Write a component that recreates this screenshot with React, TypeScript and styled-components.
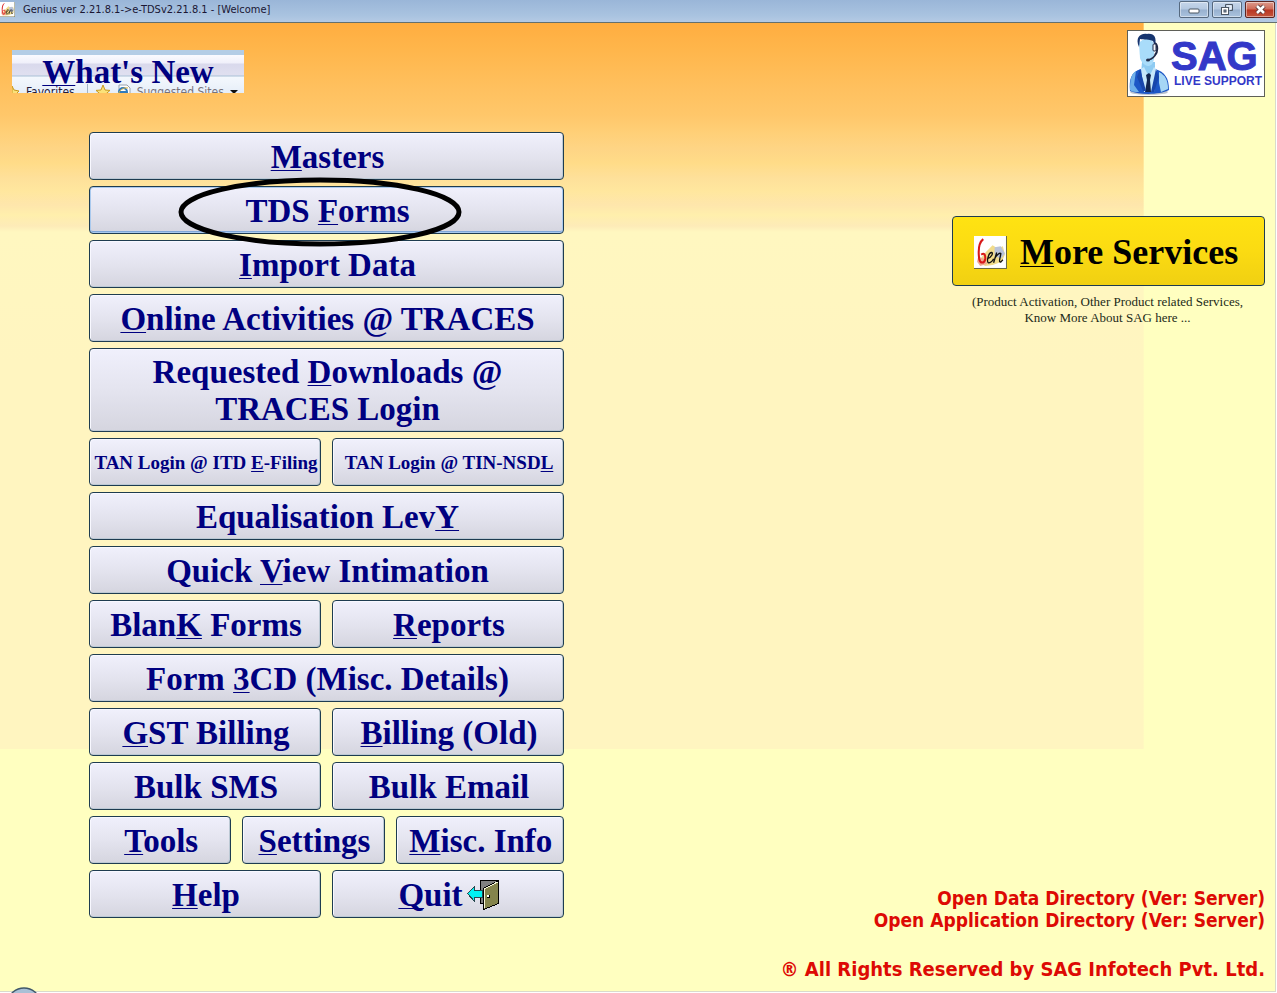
import React from 'react';
import styled, { createGlobalStyle, css } from 'styled-components';

const serif = '"Palatino Linotype", "Liberation Serif", serif';
const tahoma = '"DejaVu Sans Condensed", "DejaVu Sans", sans-serif';

const GlobalStyle = createGlobalStyle`
  * { box-sizing: border-box; }
  body { margin: 0; background: #fff; }
  button { cursor: pointer; }
`;

const Window = styled.div`
  min-height: 100vh;
  display: flex;
  flex-direction: column;
  position: relative;
  overflow: hidden;
`;

const TitleBar = styled.header`
  height: 23px;
  flex: none;
  display: flex;
  align-items: center;
  justify-content: space-between;
  padding: 0 2px 3px 0;
  background: linear-gradient(#9ab6d8, #a9c3e0 70%, #b4cae4);
  border-bottom: 1px solid #66706c;
`;

const TitleText = styled.h1`
  display: flex;
  align-items: center;
  gap: 8px;
  margin: 0;
  font: 400 11px/16px ${tahoma};
  color: #1a1633;
`;

const Controls = styled.div`
  display: flex;
  gap: 3px;
`;

const ControlButton = styled.button<{ $danger?: boolean }>`
  width: 30px;
  height: 17px;
  padding: 0;
  display: flex;
  align-items: center;
  justify-content: center;
  border: 1px solid ${p => (p.$danger ? '#5b2522' : '#56697f')};
  border-radius: 2px;
  box-shadow: inset 0 0 0 1px rgba(255, 255, 255, 0.45);
  background: ${p =>
    p.$danger
      ? 'linear-gradient(#dc9a8c, #cf6a56 48%, #b93622 52%, #c4553c)'
      : 'linear-gradient(#c6d6ea, #b4c8e0 48%, #98b1cf 52%, #a9c2de)'};
`;

const Main = styled.main`
  flex: 1;
  display: flex;
  justify-content: space-between;
  margin: 0 1px 1px 0;
  border-right: 1px solid #d9dccb;
  border-bottom: 1px solid #d9dccb;
  background:
    linear-gradient(
      180deg,
      #ffad40 0,
      #ffb54a 24px,
      #ffbf5c 60px,
      #ffc76a 92px,
      #ffcf76 108px,
      #fed585 126px,
      #ffdc88 140px,
      #fee09a 155px,
      #ffe79e 168px,
      #fee6ac 182px,
      #ffefac 192px,
      #fdebb8 203px,
      #fff7c0 209px,
      #fff5c0 340px,
      #fff5c0 100%
    ) 0 0 / 89.7% 726px no-repeat,
    #ffffc0;
`;

const LeftColumn = styled.div`
  flex: 0 1 564px;
  padding: 27px 0 73px 12px;
`;

const WhatsNewButton = styled.button`
  position: relative;
  display: block;
  width: 232px;
  height: 43px;
  padding: 0;
  overflow: hidden;
  border: 0;
  background: linear-gradient(
    #b4cde6 0 5px,
    #fafaff 5px,
    #f0f0fa 13px,
    #d9d9ec 14px,
    #e0e0f0 25px,
    #a9c0d6 26px,
    #f4f8fd 27px,
    #e6eef8 43px
  );
  font: 700 33px/45px ${serif};
  color: #000080;
`;

const WhatsNewLabel = styled.span`
  position: relative;
`;

const FavoritesStrip = styled.span`
  position: absolute;
  left: 0;
  right: 0;
  top: 34px;
  display: flex;
  align-items: center;
  gap: 6px;
  font: 400 12px/14px ${tahoma};
  color: #251a3a;
  white-space: nowrap;
`;

const SuggestedSites = styled.span`
  color: #77737c;
`;

const StripDivider = styled.span`
  width: 1px;
  height: 16px;
  margin: 0 1px 0 6px;
  background: #a3b4c6;
`;

const Menu = styled.nav`
  margin: 39px 0 0 77px;
  display: flex;
  flex-direction: column;
  gap: 6px;
`;

const MenuRow = styled.div<{ $columns?: string }>`
  display: grid;
  grid-template-columns: ${p => p.$columns ?? '1fr'};
  gap: 11px;
`;

const raised = css`
  border: 1px solid #1e3c50;
  border-radius: 4px;
`;

const MenuButton = styled.button<{ $size?: 'tall' | 'small'; $focused?: boolean }>`
  ${raised}
  position: relative;
  min-width: 0;
  height: ${p => (p.$size === 'tall' ? 84 : 48)}px;
  padding: 2px 0 0 2px;
  display: flex;
  align-items: center;
  justify-content: center;
  gap: 3px;
  background: linear-gradient(#f0f0fc, #e4e4ef 50%, #d5d5df);
  box-shadow: ${p =>
    p.$focused
      ? 'inset 0 0 0 1px #a9c9ee, inset 0 -2px 0 #7fa6d8'
      : 'inset 1px 1px 0 #f8f8ff, inset -1px -1px 0 #bcc9d4'};
  font: 700 ${p => (p.$size === 'small' ? '19px/24px' : '33px/37px')} ${serif};
  color: #000080;
`;

const Key = styled.span`
  text-decoration: underline;
  text-decoration-thickness: 1px;
  text-underline-offset: 2px;
  text-decoration-skip-ink: none;
`;

const Ring = styled.svg`
  position: absolute;
  left: 88px;
  top: -10px;
  width: 284px;
  height: 70px;
  z-index: 1;
  pointer-events: none;
`;

const RightColumn = styled.aside`
  display: flex;
  flex-direction: column;
  align-items: flex-end;
  padding: 7px 10px 10px 0;
`;

const SupportButton = styled.button`
  width: 138px;
  height: 67px;
  padding: 0;
  display: flex;
  border: 1px solid #5f6058;
  background: #fff;
  color: #3338c8;
`;

const SupportText = styled.span`
  display: flex;
  flex-direction: column;
  padding-top: 7px;
  text-align: left;
  white-space: nowrap;
  font-family: "Liberation Sans", sans-serif;
  font-weight: 700;
`;

const SupportName = styled.span`
  font-size: 40px;
  line-height: 36px;
  -webkit-text-stroke: 1px #3338c8;
`;

const SupportCaption = styled.span`
  padding-left: 3px;
  font-size: 12px;
  line-height: 14px;
`;

const Services = styled.section`
  width: 313px;
  margin-top: 119px;
`;

const ServicesButton = styled.button`
  ${raised}
  width: 100%;
  height: 70px;
  padding: 2px 0 0 21px;
  display: flex;
  align-items: center;
  gap: 13px;
  background: linear-gradient(#ffe312, #fbdb12 50%, #f0d012);
  font: 700 36px/40px ${serif};
  color: #000;
`;

const ServicesNote = styled.p`
  margin: 8px 2px 0 0;
  text-align: center;
  font: 400 13px/16px ${serif};
  color: #1c2a18;
`;

const Footer = styled.footer`
  margin-top: auto;
  display: flex;
  flex-direction: column;
  align-items: flex-end;
  font: 700 19px/22px ${tahoma};
  color: #dd0a04;
`;

const DirectoryLink = styled.a`
  color: inherit;
  text-decoration: none;
`;

const Copyright = styled.p`
  margin: 26px 0 0;
  font-size: 20px;
  line-height: 24px;
`;

const StartOrb = styled.svg`
  position: absolute;
  left: 8px;
  bottom: 0;
  width: 32px;
  height: 6px;
`;

/** Splits a caption such as "TDS &Forms" at its access key and underlines that letter. */
function Caption({ text }: { text: string }) {
  const at = text.indexOf('&');
  if (at < 0) return <span>{text}</span>;
  return (
    <span>
      {text.slice(0, at)}
      <Key>{text[at + 1]}</Key>
      {text.slice(at + 2)}
    </span>
  );
}

function GenIcon({ size }: { size: number }) {
  return (
    <svg width={size} height={size} viewBox="0 0 32 32" aria-hidden="true">
      <rect width="32" height="32" fill="#6b6b45" />
      <rect width="31" height="31" fill="#fff" />
      <path d="M12 15l6-6 5 3 5-2 2 8-3 7-9 3-7 1-7-3 3-5z" fill="#f1dc8c" />
      <path d="M20 11l6-1 4 7-4 5-6-3z" fill="#b9c3da" />
      <path d="M4 20l6 2 3 5-7 2-3-4z" fill="#f0a890" />
      <path d="M9 3C5 6 4 14 5 22c1 5 5 5 6 0 0-4-1-6-4-4" fill="none" stroke="#d81818" strokeWidth="2" />
      <path
        d="M13 22c4-1 6-6 4-6-3 0-5 9-3 10 2 0 4-2 5-4M22 16l-3 10m1-4c2-4 5-6 6-5 0 2-2 7-1 8 1 1 2-1 3-2"
        fill="none"
        stroke="#111"
        strokeWidth="1.300"
      />
    </svg>
  );
}

function Star() {
  return (
    <svg width="16" height="16" viewBox="0 0 16 16" aria-hidden="true">
      <path d="M8 1l2 5 5 .4-4 3.4 1.400 5L8 12l-4.400 2.800 1.400-5-4-3.400L6 6z" fill="#fbe27a" stroke="#c99a1e" />
    </svg>
  );
}

function BrowserPage() {
  return (
    <svg width="14" height="16" viewBox="0 0 14 16" aria-hidden="true">
      <path d="M2 1h8l3 3v11H2z" fill="#fff" stroke="#9aa3ad" />
      <circle cx="6" cy="8" r="4" fill="none" stroke="#2f7bbd" strokeWidth="2" />
      <path d="M2 8h8" stroke="#2f7bbd" strokeWidth="2" />
      <path d="M1 11C2 6 7 3 11 4" fill="none" stroke="#d9b13a" />
    </svg>
  );
}

function Agent() {
  return (
    <svg width="43" height="65" viewBox="0 0 43 65" aria-hidden="true">
      <ellipse cx="21" cy="61" rx="19" ry="3" fill="#bcc3cf" />
      <path d="M14 31h13v12l-7 8-7-8z" fill="#8ecbf2" />
      <path d="M2 60c-1-12 1-19 11-22l7 11 7-11c10 3 14 9 14 21-10 5-29 5-39 1z" fill="#1d57c6" />
      <path d="M31 41c6 3 9 8 9 17l-7 3-2-9z" fill="#a6d6f5" />
      <path d="M2 59c0-10 1-16 6-19l-2 14 5 7c-4 0-7 0-9-2z" fill="#6fb0ea" />
      <path d="M13 38l3-2 5 10 5-10 3 3-3 22H16z" fill="#c5e7fb" />
      <path d="M18 44l3-2 2 2-1 5 1 12h-6l2-12z" fill="#12254f" />
      <path d="M12 38L9 46l6 14h3zM28 38l3 8-5 15h-3z" fill="#1746ac" />
      <path d="M11 13c2-6 13-7 15 0v15c-1 5-3 7-6 7s-7-4-8-8z" fill="#a9dcfa" />
      <path d="M11 16C7 7 12 2 19 3c7-1 10 3 8 12l-2-5c-4-2-9-1-13-2z" fill="#16346f" />
      <path d="M27 12c3 2 3 9 0 12" fill="none" stroke="#222b48" strokeWidth="2" />
      <rect x="25" y="13" width="3" height="7" rx="1" fill="#f4f7fb" stroke="#222b48" />
      <path d="M28 22c-1 4-4 6-8 7" fill="none" stroke="#222b48" strokeWidth="1.500" />
      <ellipse cx="20" cy="29" rx="2" ry="1.500" fill="#222b48" />
    </svg>
  );
}

function DoorIcon() {
  return (
    <svg width="34" height="32" viewBox="0 0 34 32" shapeRendering="crispEdges" aria-hidden="true">
      <path d="M14.500 1.500h18v23h-18z" fill="#808080" stroke="#000" />
      <path d="M17.500 9.500l15-8v23l-15 6z" fill="#84844c" stroke="#000" />
      <path d="M18.500 29V10l13-7" fill="none" stroke="#f7f7d8" />
      <path d="M21 16h3v3h-3z" fill="#000" />
      <path d="M21 16h2v2h-2z" fill="#fff" />
      <path d="M1.500 14.500l7-7v4h8v7h-8v4z" fill="#00f2f2" stroke="#28484f" />
    </svg>
  );
}

export default function App() {
  return (
    <>
      <GlobalStyle />
      <Window>
        <TitleBar>
          <TitleText>
            <GenIcon size={15} />
            Genius ver 2.21.8.1-&gt;e-TDSv2.21.8.1 - [Welcome]
          </TitleText>
          <Controls>
            <ControlButton aria-label="Minimize">
              <svg width="12" height="11" viewBox="0 0 12 11">
                <rect x="1" y="5" width="10" height="4" rx="1" fill="#fff" stroke="#4b5663" />
              </svg>
            </ControlButton>
            <ControlButton aria-label="Restore">
              <svg width="12" height="11" viewBox="0 0 12 11" fill="none">
                <path d="M4.500 3.500v-3h7v6h-3" stroke="#4b5663" />
                <path d="M6 2h4v3H8" stroke="#fff" />
                <rect x="0.500" y="3.500" width="7" height="7" fill="#fff" stroke="#4b5663" />
                <rect x="3" y="6" width="2" height="2" fill="#8fa9c8" stroke="#4b5663" />
              </svg>
            </ControlButton>
            <ControlButton $danger aria-label="Close">
              <svg width="13" height="11" viewBox="0 0 13 11">
                <path d="M3 2l7 7M10 2L3 9" stroke="#5b3a3a" strokeWidth="4.500" />
                <path d="M3 2l7 7M10 2L3 9" stroke="#fff" strokeWidth="2.500" />
              </svg>
            </ControlButton>
          </Controls>
        </TitleBar>

        <Main>
          <LeftColumn>
            <WhatsNewButton>
              <FavoritesStrip aria-hidden="true">
                <svg width="8" height="16" viewBox="0 0 8 16">
                  <path d="M0 2l2 4 5 1-4 4 1 4-4-2z" fill="#fbe27a" stroke="#c99a1e" />
                </svg>
                Favorites
                <StripDivider />
                <Star />
                <BrowserPage />
                <SuggestedSites>Suggested Sites</SuggestedSites>
                <svg width="8" height="6" viewBox="0 0 8 6">
                  <path d="M0 1h8L4 5z" fill="#111" />
                </svg>
              </FavoritesStrip>
              <WhatsNewLabel>
                <Caption text="&What's New" />
              </WhatsNewLabel>
            </WhatsNewButton>

            <Menu aria-label="Main menu">
              <MenuButton><Caption text="&Masters" /></MenuButton>
              <MenuButton $focused>
                <Caption text="TDS &Forms" />
                <Ring viewBox="0 0 284 70" aria-hidden="true">
                  <ellipse cx="142" cy="35" rx="139" ry="32" fill="none" stroke="#000" strokeWidth="5" />
                </Ring>
              </MenuButton>
              <MenuButton><Caption text="&Import Data" /></MenuButton>
              <MenuButton><Caption text="&Online Activities @ TRACES" /></MenuButton>
              <MenuButton $size="tall">
                <span>
                  <Caption text="Requested &Downloads @" />
                  <br />
                  TRACES Login
                </span>
              </MenuButton>
              <MenuRow $columns="1fr 1fr">
                <MenuButton $size="small"><Caption text="TAN Login @ ITD &E-Filing" /></MenuButton>
                <MenuButton $size="small"><Caption text="TAN Login @ TIN-NSD&L" /></MenuButton>
              </MenuRow>
              <MenuButton><Caption text="Equalisation Lev&Y" /></MenuButton>
              <MenuButton><Caption text="Quick &View Intimation" /></MenuButton>
              <MenuRow $columns="1fr 1fr">
                <MenuButton><Caption text="Blan&K Forms" /></MenuButton>
                <MenuButton><Caption text="&Reports" /></MenuButton>
              </MenuRow>
              <MenuButton><Caption text="Form &3CD (Misc. Details)" /></MenuButton>
              <MenuRow $columns="1fr 1fr">
                <MenuButton><Caption text="&GST Billing" /></MenuButton>
                <MenuButton><Caption text="&Billing (Old)" /></MenuButton>
              </MenuRow>
              <MenuRow $columns="1fr 1fr">
                <MenuButton><Caption text="Bulk SMS" /></MenuButton>
                <MenuButton><Caption text="Bulk Email" /></MenuButton>
              </MenuRow>
              <MenuRow $columns="142fr 142fr 168fr">
                <MenuButton><Caption text="&Tools" /></MenuButton>
                <MenuButton><Caption text="&Settings" /></MenuButton>
                <MenuButton><Caption text="&Misc. Info" /></MenuButton>
              </MenuRow>
              <MenuRow $columns="1fr 1fr">
                <MenuButton><Caption text="&Help" /></MenuButton>
                <MenuButton>
                  <Caption text="&Quit" />
                  <DoorIcon />
                </MenuButton>
              </MenuRow>
            </Menu>
          </LeftColumn>

          <RightColumn>
            <SupportButton>
              <Agent />
              <SupportText>
                <SupportName>SAG</SupportName>
                <SupportCaption>LIVE SUPPORT</SupportCaption>
              </SupportText>
            </SupportButton>
            <Services>
              <ServicesButton>
                <GenIcon size={33} />
                <Caption text="&More Services" />
              </ServicesButton>
              <ServicesNote>
                (Product Activation, Other Product related Services,
                <br />
                Know More About SAG here ...
              </ServicesNote>
            </Services>
            <Footer>
              <DirectoryLink href="#data">Open Data Directory (Ver: Server)</DirectoryLink>
              <DirectoryLink href="#application">Open Application Directory (Ver: Server)</DirectoryLink>
              <Copyright>® All Rights Reserved by SAG Infotech Pvt. Ltd.</Copyright>
            </Footer>
          </RightColumn>
        </Main>
        <StartOrb viewBox="0 0 32 6" aria-hidden="true">
          <ellipse cx="16" cy="14" rx="15" ry="13" fill="#a9c0d6" stroke="#41586a" strokeWidth="1.500" />
        </StartOrb>
      </Window>
    </>
  );
}
